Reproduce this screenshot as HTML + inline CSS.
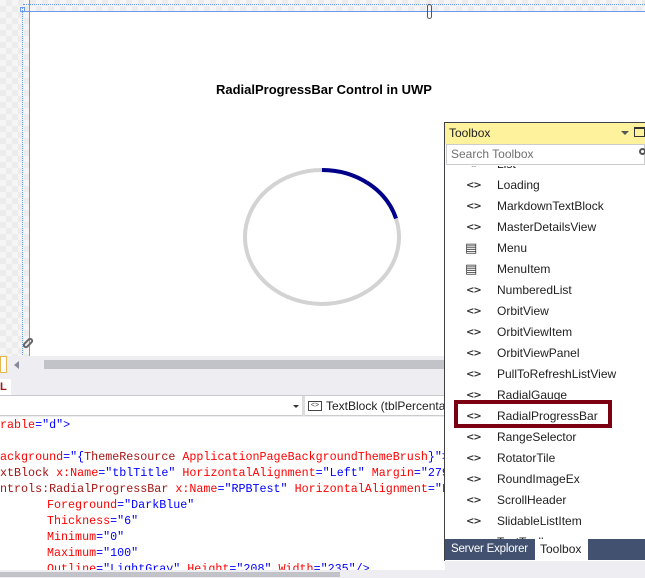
<!DOCTYPE html>
<html style="overflow:hidden;width:645px;height:578px"><head><meta charset="utf-8"><style>
*{margin:0;padding:0;box-sizing:border-box}
body{width:645px;height:578px;overflow:hidden;position:relative;background:#eeeef2;font-family:"Liberation Sans",sans-serif}
.abs{position:absolute}
.checker{background-color:#f5f5f5;background-image:linear-gradient(45deg,#ececec 25%,transparent 25%,transparent 75%,#ececec 75%),linear-gradient(45deg,#ececec 25%,transparent 25%,transparent 75%,#ececec 75%);background-size:12px 12px;background-position:0 0,6px 6px}
.code{font-family:"Liberation Mono",monospace;font-size:11.7px;line-height:16px;white-space:pre;color:#0000ff}
.r{color:#ff0000}.m{color:#a31515}
.ind{display:inline-block;width:47px}
.tb{font-size:12px;color:#1e1e1e}
.item{position:absolute;left:0;height:21px;line-height:21px;width:190px}
.item .ic{position:absolute;left:21px;font-family:"DejaVu Sans",sans-serif;font-size:10px;font-weight:bold;color:#333;letter-spacing:-1px}
.item .t{position:absolute;left:52px}
</style></head><body>
<div class="abs checker" style="left:0;top:0;width:645px;height:356px"></div>
<div class="abs" style="left:30px;top:11px;width:615px;height:345px;background:#fff"></div>
<div class="abs" style="left:23px;top:11px;width:622px;height:1px;background:#6a9bea"></div>
<div class="abs" style="left:23px;top:4px;width:622px;height:0;border-top:1px dotted #6a9bea"></div>
<div class="abs" style="left:22px;top:7px;width:0;height:350px;border-left:1px dotted #6a9bea"></div>
<div class="abs" style="left:29px;top:0;width:1px;height:356px;background:#6a9bea"></div>
<div class="abs" style="left:20px;top:7px;width:5px;height:5px;border:1px solid #6a9bea"></div>
<div class="abs" style="left:427px;top:4px;width:5px;height:15px;border:1px solid #555;border-radius:3px"></div>
<div class="abs" style="left:25px;top:337px;width:6px;height:12px;border:2px solid #666;border-radius:3px;transform:rotate(45deg)"></div>
<div class="abs" style="left:216px;top:82px;font-weight:bold;font-size:13px;color:#000">RadialProgressBar Control in UWP</div>
<svg class="abs" style="left:0;top:0" width="645" height="356">
<ellipse cx="322" cy="237" rx="77" ry="67" fill="none" stroke="#d3d3d3" stroke-width="4"/>
<path d="M322 170 A77 67 0 0 1 396 218.5" fill="none" stroke="#00008b" stroke-width="4"/>
</svg>
<div class="abs" style="left:0;top:356px;width:645px;height:18px;background:#eeeef2"></div>
<div class="abs" style="left:0;top:356px;width:7px;height:17px;border:1px solid #e8b54a;background:#fff"></div>
<div class="abs" style="left:14px;top:361px;width:0;height:0;border-top:4px solid transparent;border-bottom:4px solid transparent;border-right:5px solid #868999"></div>
<div class="abs" style="left:44px;top:360px;width:401px;height:9px;background:#c2c3c9"></div>
<div class="abs" style="left:0;top:379px;width:11px;height:17px;background:#fff;font-size:11px;color:#a31515;line-height:17px;font-weight:bold">L</div>
<div class="abs" style="left:0;top:395px;width:445px;height:1px;background:#c8c8d0"></div>
<div class="abs" style="left:0;top:396px;width:445px;height:20px;background:#fff;border-bottom:1px solid #ccc"></div>
<div class="abs" style="left:293px;top:405px;width:0;height:0;border-left:3px solid transparent;border-right:3px solid transparent;border-top:3px solid #333"></div>
<div class="abs" style="left:302px;top:396px;width:3px;height:20px;background:#ddd"></div>
<div class="abs" style="left:308px;top:401px;width:14px;height:10px;border:1px solid #444;font-size:7px;line-height:8px;text-align:center;color:#444">&lt;&gt;</div>
<div class="abs" style="left:326px;top:397px;font-size:12px;line-height:18px;color:#1e1e1e">TextBlock (tblPercenta</div>
<div class="abs" style="left:0;top:417px;width:445px;height:161px;background:#fff;overflow:hidden">
<div class="abs code" style="left:0;top:0"><span class="r">rable</span>="d"&gt;

<span class="r">ackground</span>="{<span class="m">ThemeResource</span> <span class="r">ApplicationPageBackgroundThemeBrush</span>}"&gt;
<span class="m">xtBlock</span> <span class="r">x:Name</span>="tblTitle" <span class="r">HorizontalAlignment</span>="Left" <span class="r">Margin</span>="279
<span class="m">ntrols:RadialProgressBar</span> <span class="r">x:Name</span>="RPBTest" <span class="r">HorizontalAlignment</span>="L
<span class="ind"></span><span class="r">Foreground</span>="DarkBlue"
<span class="ind"></span><span class="r">Thickness</span>="6"
<span class="ind"></span><span class="r">Minimum</span>="0"
<span class="ind"></span><span class="r">Maximum</span>="100"
<span class="ind"></span><span class="r">Outline</span>="LightGray" <span class="r">Height</span>="208" <span class="r">Width</span>="235"/&gt;</div>
</div>
<div class="abs" style="left:0;top:570px;width:445px;height:8px;background:#eeeef2"></div>
<div class="abs" style="left:0;top:572px;width:340px;height:5px;background:#c2c3c9"></div>
<div class="abs" style="left:444px;top:122px;width:201px;height:439px;background:#fff;border:1px solid #3f3f46;border-right:none;border-bottom:none"></div>
<div class="abs" style="left:445px;top:123px;width:200px;height:21px;background:#fff29d;font-size:12px;line-height:21px;padding-left:4px;color:#1e1e1e">Toolbox</div>
<div class="abs" style="left:621px;top:131px;width:0;height:0;border-left:4px solid transparent;border-right:4px solid transparent;border-top:4px solid #555"></div>
<div class="abs" style="left:634px;top:127px;width:11px;height:10px;border:1px solid #333;border-top-width:2px"></div>
<div class="abs" style="left:446px;top:144px;width:199px;height:21px;border:1px solid #ccc;background:#fff;font-size:12px;line-height:19px;padding-left:4px;color:#717171">Search Toolbox</div>
<div class="abs" style="left:639px;top:148px;width:7px;height:7px;border:2px solid #555;border-radius:50%"></div>
<div class="abs" style="left:445px;top:166px;width:200px;height:373px;overflow:hidden">
<div style="position:relative;top:-9px" class="tb">
<div class="item" style="top:-3px"><span class="ic">&lt;&gt;</span><span class="t">List</span></div>
<div class="item" style="top:18px"><span class="ic">&lt;&gt;</span><span class="t">Loading</span></div>
<div class="item" style="top:39px"><span class="ic">&lt;&gt;</span><span class="t">MarkdownTextBlock</span></div>
<div class="item" style="top:60px"><span class="ic">&lt;&gt;</span><span class="t">MasterDetailsView</span></div>
<div class="item" style="top:81px"><span class="ic" style="font-weight:normal;font-size:13px;left:20px">&#9636;</span><span class="t">Menu</span></div>
<div class="item" style="top:102px"><span class="ic" style="font-weight:normal;font-size:13px;left:20px">&#9636;</span><span class="t">MenuItem</span></div>
<div class="item" style="top:123px"><span class="ic">&lt;&gt;</span><span class="t">NumberedList</span></div>
<div class="item" style="top:144px"><span class="ic">&lt;&gt;</span><span class="t">OrbitView</span></div>
<div class="item" style="top:165px"><span class="ic">&lt;&gt;</span><span class="t">OrbitViewItem</span></div>
<div class="item" style="top:186px"><span class="ic">&lt;&gt;</span><span class="t">OrbitViewPanel</span></div>
<div class="item" style="top:207px"><span class="ic">&lt;&gt;</span><span class="t">PullToRefreshListView</span></div>
<div class="item" style="top:228px"><span class="ic">&lt;&gt;</span><span class="t">RadialGauge</span></div>
<div class="item" style="top:249px"><span class="ic">&lt;&gt;</span><span class="t">RadialProgressBar</span></div>
<div class="item" style="top:270px"><span class="ic">&lt;&gt;</span><span class="t">RangeSelector</span></div>
<div class="item" style="top:291px"><span class="ic">&lt;&gt;</span><span class="t">RotatorTile</span></div>
<div class="item" style="top:312px"><span class="ic">&lt;&gt;</span><span class="t">RoundImageEx</span></div>
<div class="item" style="top:333px"><span class="ic">&lt;&gt;</span><span class="t">ScrollHeader</span></div>
<div class="item" style="top:354px"><span class="ic">&lt;&gt;</span><span class="t">SlidableListItem</span></div>
<div class="item" style="top:375px"><span class="ic">&lt;&gt;</span><span class="t">TextToolbar</span></div>
</div></div>
<div class="abs" style="left:454px;top:400px;width:158px;height:28px;border:4px solid #7b0012"></div>
<div class="abs" style="left:445px;top:539px;width:200px;height:21px;background:#425170"></div>
<div class="abs" style="left:451px;top:539px;font-size:11.5px;line-height:21px;color:#fff;letter-spacing:-0.2px">Server Explorer</div>
<div class="abs" style="left:535px;top:539px;width:53px;height:21px;background:#fff;font-size:12px;line-height:20px;padding-left:5px;color:#1e1e1e">Toolbox</div>
</body></html>
